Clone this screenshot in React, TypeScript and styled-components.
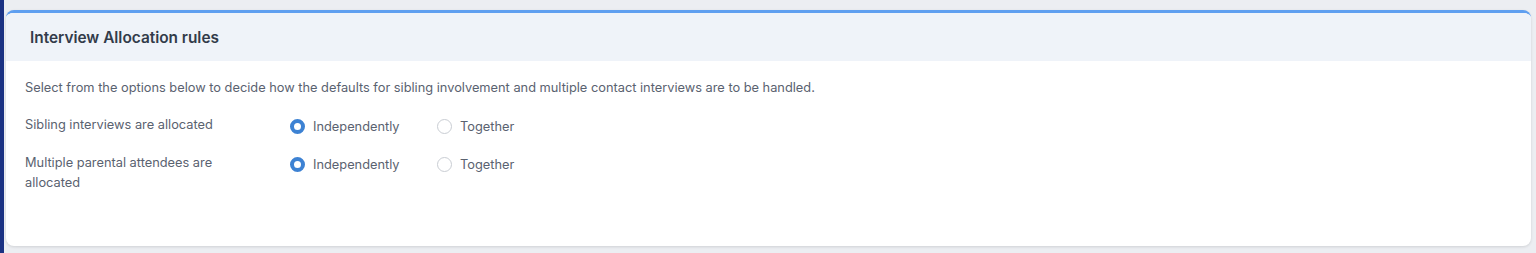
import React from "react";
import styled, { createGlobalStyle } from "styled-components";

const Global = createGlobalStyle`
  html, body { margin: 0; padding: 0; background: #eceef2; }
  body { font-family: Inter, "Noto Sans", sans-serif; }
`;

const Page = styled.div`
  display: flex;
  height: 253px;
  background: #eceef2;
`;

const SideStrip = styled.div`
  width: 4px;
  flex: none;
  background: #1b3283;
`;

const Main = styled.div`
  flex: 1;
  padding: 10px 5px 0 2px;
`;

const Card = styled.section`
  background: #ffffff;
  border-top: 3px solid #5f9ff0;
  border-radius: 8px;
  box-shadow: 0 1px 3px rgba(0, 0, 0, 0.12);
  overflow: hidden;
  height: 233px;
  display: flex;
  flex-direction: column;
`;

const Header = styled.header`
  background: #eff3f9;
  height: 48px;
  display: flex;
  align-items: center;
  padding-left: 24px;
`;

const Title = styled.h2`
  margin: 0;
  font-size: 15.4px;
  font-weight: 600;
  color: #323b4a;
`;

const Body = styled.div`
  padding: 18px 19px 0;
  display: flex;
  flex-direction: column;
`;

const Description = styled.p`
  margin: 0 0 17px;
  font-size: 12.8px;
  line-height: 18px;
  color: #5a6270;
`;

const Row = styled.div`
  display: grid;
  grid-template-columns: 265px 1fr;
  align-items: start;
  margin-bottom: 16px;
`;

const Label = styled.div`
  margin-top: 1px;
  font-size: 12.8px;
  line-height: 20px;
  color: #5a6270;
  width: 200px;
`;

const Options = styled.div`
  display: flex;
  align-items: center;
  height: 20px;
  margin-top: 2px;
`;

const Option = styled.label`
  display: flex;
  align-items: center;
  gap: 8px;
  width: 147px;
  font-size: 12.8px;
  color: #5a6270;
  cursor: pointer;
`;

const Radio = styled.span<{ $checked?: boolean }>`
  box-sizing: border-box;
  width: 15px;
  height: 15px;
  border-radius: 50%;
  background: #fff;
  border: ${(p) => (p.$checked ? "4px solid #3d82d3" : "1px solid #c9cdd3")};
  flex: none;
`;

const rows = [
  { label: "Sibling interviews are allocated" },
  { label: "Multiple parental attendees are allocated" },
];

export default function App() {
  return (
    <Page>
      <Global />
      <SideStrip />
      <Main>
        <Card>
          <Header>
            <Title>Interview Allocation rules</Title>
          </Header>
          <Body>
            <Description>
              Select from the options below to decide how the defaults for sibling involvement and multiple contact
              interviews are to be handled.
            </Description>
            {rows.map((r) => (
              <Row key={r.label}>
                <Label>{r.label}</Label>
                <Options>
                  <Option>
                    <Radio $checked />
                    Independently
                  </Option>
                  <Option>
                    <Radio />
                    Together
                  </Option>
                </Options>
              </Row>
            ))}
          </Body>
        </Card>
      </Main>
    </Page>
  );
}
